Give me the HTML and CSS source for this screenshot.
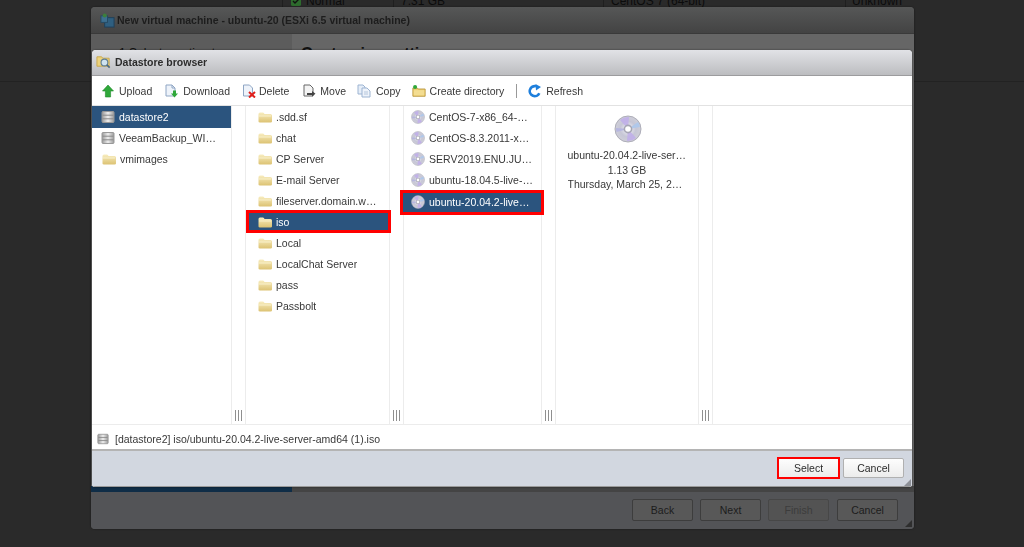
FILE: index.html
```html
<!DOCTYPE html>
<html lang="en">
<head>
<meta charset="utf-8">
<title>Datastore browser</title>
<link rel="stylesheet" href="styles.css">
</head>
<body>
<svg class="sprite" aria-hidden="true">
  <defs>
    <linearGradient id="fold" x1="0" y1="0" x2="0" y2="1"><stop offset="0" stop-color="#f8edc0"/><stop offset="1" stop-color="#dcc272"/></linearGradient>
    <linearGradient id="stor" x1="0" y1="0" x2="1" y2="0"><stop offset="0" stop-color="#9a9a9a"/><stop offset=".5" stop-color="#eeeeee"/><stop offset="1" stop-color="#9a9a9a"/></linearGradient>
    <radialGradient id="discg"><stop offset="0" stop-color="#f4f4f8"/><stop offset=".6" stop-color="#c6c6d6"/><stop offset="1" stop-color="#cfcfd8"/></radialGradient>
    <symbol id="i-folder" viewBox="0 0 16 16"><path d="M1.500 5q0-1.500 1.500-1.500h3q1 0 1.500 1.500h6q1.500 0 1.500 1.500v6q0 1-1.500 1h-10.500q-1.500 0-1.500-1z" fill="url(#fold)"/><path d="M2 7h12" stroke="#fdf6d6" stroke-width=".8"/></symbol>
    <symbol id="i-store" viewBox="0 0 14 14"><rect x="1" y="1.500" width="12" height="11" rx="1" fill="url(#stor)" stroke="#999"/><path d="M1.500 5.200h11M1.500 8.800h11" stroke="#8a8a8a"/></symbol>
    <symbol id="i-disc" viewBox="0 0 28 28"><circle cx="14" cy="14" r="13" fill="url(#discg)" stroke="#adadb8"/><path d="M14 14L6 5a12 12 0 0 1 9-3zM14 14l8 9a12 12 0 0 1-9 3z" fill="#bfaeea" opacity=".85"/><path d="M14 14L24 7a12 12 0 0 1 2 5z" fill="#b0c8ea"/><path d="M14 14L2.500 17a12 12 0 0 1-.5-4z" fill="#b6b6e0"/><circle cx="14" cy="14" r="4.400" fill="#a6a6b4"/><circle cx="14" cy="14" r="2.800" fill="#fff"/></symbol>
  </defs>
</svg>

<div class="backdrop">
  <div class="bg-row">
    <span class="bg-cell bg-status"><svg class="bg-check" viewBox="0 0 12 12"><rect x="1" y="1" width="10" height="10" rx="1.500" fill="#2d6b2d"/><path d="M3 6l2 2 4-4" fill="none" stroke="#111" stroke-width="1.400"/></svg>Normal</span>
    <span class="bg-cell bg-size">7.31 GB</span>
    <span class="bg-cell bg-os">CentOS 7 (64-bit)</span>
    <span class="bg-cell bg-state">Unknown</span>
  </div>
  <div class="bg-line"></div>
</div>

<section class="wizard">
  <header class="wizard-head">
    <svg class="icon-15" viewBox="0 0 16 16"><rect x="5" y="5" width="10" height="10" fill="#2f5f80" stroke="#1e3f58"/><rect x="1" y="3" width="7" height="7" fill="#3d6f8f" stroke="#254a63"/><circle cx="5" cy="2.600" r="2.200" fill="#3c7f3c"/></svg>
    <span>New virtual machine - ubuntu-20 (ESXi 6.5 virtual machine)</span>
  </header>
  <div class="wizard-main">
    <nav class="wizard-nav"><span>1 Select creation type</span></nav>
    <div class="wizard-body"><h2>Customize settings</h2></div>
  </div>
  <div class="wizard-progress"></div>
  <footer class="wizard-foot">
    <button class="dim-btn" type="button">Back</button>
    <button class="dim-btn" type="button">Next</button>
    <button class="dim-btn is-disabled" type="button">Finish</button>
    <button class="dim-btn dim-last" type="button">Cancel</button>
  </footer>
  <svg class="grip" viewBox="0 0 8 8"><path d="M8 0v8H0z" fill="#2e2e2e"/></svg>
</section>

<section class="dialog">
  <header class="dialog-head">
    <svg class="icon-15" viewBox="0 0 16 16"><path d="M1 3h5l1.200 1.500H14V13H1z" fill="#ecd27c" stroke="#c9a84c"/><circle cx="9" cy="9" r="3.600" fill="#cfe3ef" stroke="#5f7f96" stroke-width="1.200"/><path d="M11.600 11.600l3 3" stroke="#4d6a80" stroke-width="1.800"/></svg>
    <span>Datastore browser</span>
  </header>
  <div class="toolbar">
    <span class="tool tool-upload"><svg class="icon-14" viewBox="0 0 14 14"><path d="M7 1l5.500 6H9.600v6H4.400V7H1.500z" fill="#2fa83a" stroke="#1f8a2a" stroke-width=".6"/></svg>Upload</span>
    <span class="tool tool-download"><svg class="icon-14" viewBox="0 0 14 14"><path d="M2 1h6l3 3v8H2z" fill="#eef3fa" stroke="#8fa6c4"/><path d="M8 1v3h3" fill="none" stroke="#8fa6c4"/><path d="M9 6.500h3v3h2l-3.500 4-3.500-4h2z" fill="#2fa83a"/></svg>Download</span>
    <span class="tool tool-delete"><svg class="icon-14" viewBox="0 0 14 14"><path d="M1.500 1h6l3 3v8h-9z" fill="#eef3fa" stroke="#8fa6c4"/><path d="M7 8l6 5.500M13 8l-6 5.500" stroke="#e0201c" stroke-width="2"/></svg>Delete</span>
    <span class="tool tool-move"><svg class="icon-14" viewBox="0 0 14 14"><path d="M2 1h6l3 3v8H2z" fill="#f4f4f4" stroke="#666"/><path d="M5 9h5V7l3.500 2.800L10 12.500V11H5z" fill="#444"/></svg>Move</span>
    <span class="tool tool-copy"><svg class="icon-14" viewBox="0 0 14 14"><path d="M1 1h5l2 2v7H1z" fill="#e6eef8" stroke="#9db4d2"/><path d="M5 4h5l3 3v6H5z" fill="#eef3fa" stroke="#9db4d2"/><path d="M7 8h4M7 10h4" stroke="#b5c6dc"/></svg>Copy</span>
    <span class="tool tool-create"><svg class="icon-14" viewBox="0 0 16 14"><path d="M1 3.500h5l1 1.200h8V13H1z" fill="#eccd6e" stroke="#b8963e"/><rect x="2" y="6" width="12" height="6" fill="#f3dd92"/><circle cx="3.500" cy="2.500" r="2.300" fill="#2fa83a"/></svg>Create directory</span>
    <span class="tool-sep"></span>
    <span class="tool tool-refresh"><svg class="icon-14" viewBox="0 0 14 14"><path d="M11.300 9.200A5 5 0 1 1 8 2.300" fill="none" stroke="#1e7fdc" stroke-width="2.600"/><path d="M7.500 0l5.500 3-5 3.500z" fill="#1e7fdc"/></svg>Refresh</span>
  </div>

  <div class="browser">
    <div class="col col-1">
      <div class="row is-sel"><svg class="row-icon store"><use href="#i-store"/></svg><span>datastore2</span></div>
      <div class="row"><svg class="row-icon store"><use href="#i-store"/></svg><span>VeeamBackup_WIN2016</span></div>
      <div class="row"><svg class="row-icon"><use href="#i-folder"/></svg><span>vmimages</span></div>
    </div>
    <div class="handle"><span></span></div>
    <div class="col col-2">
      <div class="row"><svg class="row-icon"><use href="#i-folder"/></svg><span>.sdd.sf</span></div>
      <div class="row"><svg class="row-icon"><use href="#i-folder"/></svg><span>chat</span></div>
      <div class="row"><svg class="row-icon"><use href="#i-folder"/></svg><span>CP Server</span></div>
      <div class="row"><svg class="row-icon"><use href="#i-folder"/></svg><span>E-mail Server</span></div>
      <div class="row"><svg class="row-icon"><use href="#i-folder"/></svg><span>fileserver.domain.work</span></div>
      <div class="row is-sel marked-iso"><svg class="row-icon"><use href="#i-folder"/></svg><span>iso</span></div>
      <div class="row"><svg class="row-icon"><use href="#i-folder"/></svg><span>Local</span></div>
      <div class="row"><svg class="row-icon"><use href="#i-folder"/></svg><span>LocalChat Server</span></div>
      <div class="row"><svg class="row-icon"><use href="#i-folder"/></svg><span>pass</span></div>
      <div class="row"><svg class="row-icon"><use href="#i-folder"/></svg><span>Passbolt</span></div>
    </div>
    <div class="handle"><span></span></div>
    <div class="col col-3">
      <div class="row"><svg class="row-icon disc"><use href="#i-disc"/></svg><span>CentOS-7-x86_64-DVD-2009.iso</span></div>
      <div class="row"><svg class="row-icon disc"><use href="#i-disc"/></svg><span>CentOS-8.3.2011-x86_64.iso</span></div>
      <div class="row"><svg class="row-icon disc"><use href="#i-disc"/></svg><span>SERV2019.ENU.JUN2021.iso</span></div>
      <div class="row"><svg class="row-icon disc"><use href="#i-disc"/></svg><span>ubuntu-18.04.5-live-server.iso</span></div>
      <div class="row is-sel marked-file"><svg class="row-icon disc"><use href="#i-disc"/></svg><span>ubuntu-20.04.2-live-server.iso</span></div>
    </div>
    <div class="handle"><span></span></div>
    <div class="col col-4">
      <svg class="preview-disc"><use href="#i-disc"/></svg>
      <div class="preview-line">ubuntu-20.04.2-live-server-amd64 (1).iso</div>
      <div class="preview-line">1.13 GB</div>
      <div class="preview-line">Thursday, March 25, 2021</div>
    </div>
    <div class="handle"><span></span></div>
    <div class="col col-5"></div>
  </div>

  <div class="status">
    <svg class="status-icon"><use href="#i-store"/></svg>
    <span>[datastore2] iso/ubuntu-20.04.2-live-server-amd64 (1).iso</span>
  </div>
  <footer class="dialog-foot">
    <button class="btn btn-marked" type="button">Select</button>
    <button class="btn" type="button">Cancel</button>
  </footer>
  <svg class="grip grip-light" viewBox="0 0 8 8"><path d="M8 0v8H0z" fill="#8d9097"/></svg>
</section>
</body>
</html>
```
FILE: styles.css
```css
* { box-sizing: border-box; }
html { height: 100%; background: #2a2a2a; }
body {
  height: 100%;
  margin: 0;
  overflow: hidden;
  font-family: "Liberation Sans", Arial, sans-serif;
  font-size: 10.5px;
  color: #333;
  position: relative;
}
.sprite { position: absolute; width: 0; height: 0; }

.backdrop { height: 100%; background: #2a2a2a; }
.bg-row {
  display: flex;
  height: 7px;
  padding-left: 282px;
  font-size: 12px;
  color: #0c0c0c;
  line-height: 12px;
  overflow: hidden;
}
.bg-cell { display: flex; align-items: flex-end; height: 7px; border-left: 1px solid #1f1f1f; white-space: nowrap; }
.bg-status { width: 111px; padding-left: 7px; gap: 4px; }
.bg-check { width: 12px; height: 12px; flex: none; }
.bg-size { width: 210px; padding-left: 7px; }
.bg-os { width: 242px; padding-left: 7px; }
.bg-state { padding-left: 6px; }
.bg-line { margin-top: 74px; height: 1px; background: #222; }

.wizard {
  position: absolute;
  left: 91px; top: 7px;
  width: 823px; height: 522px;
  display: flex;
  flex-direction: column;
  border-radius: 4px;
  overflow: hidden;
  background: #555658;
  box-shadow: 0 0 2px rgba(0,0,0,.5);
  filter: blur(.3px);
}
.wizard-head {
  height: 27px;
  flex: none;
  display: flex;
  align-items: center;
  gap: 2px;
  padding: 0 9px;
  background: linear-gradient(#565757, #434343);
  border-bottom: 1px solid #3a3a3a;
  color: #1d1d1d;
  font-size: 10.5px;
  font-weight: bold;
}
.wizard-main { flex: 1; display: flex; min-height: 0; overflow: hidden; }
.wizard-nav { width: 201px; background: #5c5c5c; padding: 12px 28px; font-size: 12px; color: #111; }
.wizard-body { flex: 1; background: #666; padding: 10px 9px; }
.wizard-body h2 { margin: 0; font-size: 16px; color: #111; line-height: 20px; }
.wizard-progress { height: 6px; flex: none; background: linear-gradient(90deg, #0f2d47 0 201px, #444 201px); }
.wizard-foot {
  height: 37px;
  flex: none;
  display: flex;
  justify-content: flex-end;
  align-items: flex-start;
  gap: 7px;
  padding: 7px 16px 0 0;
  background: #535457;
}
.dim-btn {
  width: 61px; height: 22px;
  padding: 0;
  border: 1px solid #3d3d3d;
  border-radius: 2px;
  background: #585858;
  color: #1c1c1c;
  font: 10.5px "Liberation Sans", Arial, sans-serif;
}
.dim-btn.is-disabled { background: #535353; color: #3c3c3c; border-color: #474747; }
.dim-last { margin-left: 1px; }
.grip { position: absolute; right: 2px; bottom: 2px; width: 7px; height: 7px; }

.dialog {
  position: absolute;
  left: 92px; top: 50px;
  width: 820px; height: 437px;
  display: flex;
  flex-direction: column;
  background: #fff;
  border-radius: 4px 4px 3px 3px;
  overflow: hidden;
  box-shadow: 0 0 2px rgba(0,0,0,.6);
  filter: blur(.3px);
}
.dialog-head {
  height: 26px;
  flex: none;
  display: flex;
  align-items: center;
  gap: 4px;
  padding: 0 4px 2px;
  background: linear-gradient(#e1e2e6, #bcbdc0);
  border-bottom: 1px solid #9c9c9e;
  color: #2c2c2c;
  font-weight: bold;
  font-size: 10.5px;
}
.icon-15 { width: 15px; height: 15px; flex: none; }
.icon-14 { width: 14px; height: 14px; flex: none; }

.toolbar {
  height: 30px;
  flex: none;
  display: flex;
  align-items: center;
  padding-left: 9px;
  border-bottom: 1px solid #e2e2e2;
  color: #383838;
}
.tool { display: flex; align-items: center; gap: 4px; margin-right: 12px; white-space: nowrap; }
.tool-download { gap: 5px; }
.tool-delete { gap: 3px; margin-right: 13px; }
.tool-move { margin-right: 11px; }
.tool-copy { gap: 5px; margin-right: 11px; }
.tool-refresh { gap: 4px; }
.tool-sep { width: 1px; height: 14px; background: #999; margin-right: 11px; }

.browser { flex: 1; min-height: 0; display: flex; border-bottom: 1px solid #ececec; }
.col { flex: none; min-width: 0; }
.col-1 { width: 139px; }
.col-2 { width: 143px; }
.col-3 { width: 137px; }
.col-4 { width: 142px; display: flex; flex-direction: column; align-items: center; padding-top: 9px; }
.col-5 { flex: 1; }
.handle {
  flex: none;
  width: 15px;
  border-left: 1px solid #ececec;
  border-right: 1px solid #ececec;
  display: flex;
  align-items: flex-end;
  justify-content: center;
  padding-bottom: 3px;
}
.handle span {
  width: 7px; height: 11px;
  background: repeating-linear-gradient(90deg, #8f8f8f 0 1px, #fff 1px 3px);
}
.row {
  height: 21px;
  display: flex;
  align-items: center;
  gap: 3px;
  padding-left: 9px;
  color: #383838;
  white-space: nowrap;
}
.row span { overflow: hidden; text-overflow: ellipsis; min-width: 0; }
.row-icon { width: 16px; height: 16px; flex: none; }
.row-icon.store { width: 14px; height: 14px; margin-left: 0; margin-right: 1px; }
.row-icon.disc { width: 14px; height: 14px; margin-left: 1px; margin-right: 1px; }
.col-1 .row { padding-right: 14px; }
.col-2 .row { padding-left: 11px; padding-right: 12px; }
.col-3 .row { padding-left: 6px; padding-right: 7px; }
.row.is-sel { background: #2b547e; color: #fff; }
.col-1 .row.is-sel { height: 22px; margin-bottom: -1px; }

.marked-iso {
  height: 17px;
  margin: 2px 1px 2px 3px;
  outline: 3px solid #f00;
  position: relative;
  z-index: 1;
}
.col-2 .row.marked-iso { padding-left: 8px; padding-right: 11px; }
.col-3 .row.marked-file {
  height: 19px;
  margin: 3px 0 0 -1px;
  padding: 0 9px 2px 7px;
  outline: 3px solid #f00;
  position: relative;
  z-index: 1;
}

.preview-disc { width: 28px; height: 28px; margin: 0 0 5px 2px; }
.preview-line {
  width: 119px;
  line-height: 14.500px;
  text-align: center;
  color: #383838;
  white-space: nowrap;
  overflow: hidden;
  text-overflow: ellipsis;
}

.status {
  height: 26px;
  flex: none;
  display: flex;
  align-items: center;
  gap: 6px;
  padding: 3px 0 0 5px;
  background: #fff;
  border-bottom: 2px solid #b4b4b4;
  color: #383838;
}
.status-icon { width: 12px; height: 12px; flex: none; }
.dialog-foot {
  height: 36px;
  flex: none;
  display: flex;
  justify-content: flex-end;
  gap: 4px;
  padding: 7px 8px 0 0;
  background: #d2d7e0;
  border-bottom: 1px solid #9a9a9a;
}
.btn {
  width: 61px; height: 20px;
  padding: 0;
  border: 1px solid #b0b0b0;
  border-radius: 2px;
  background: linear-gradient(#fdfdfd, #ececec);
  color: #2c2c2c;
  font: 10.5px "Liberation Sans", Arial, sans-serif;
}
.btn-marked { outline: 2px solid #f00; outline-offset: -1px; border-radius: 0; }
.grip-light { right: 1px; bottom: 1px; }
```
